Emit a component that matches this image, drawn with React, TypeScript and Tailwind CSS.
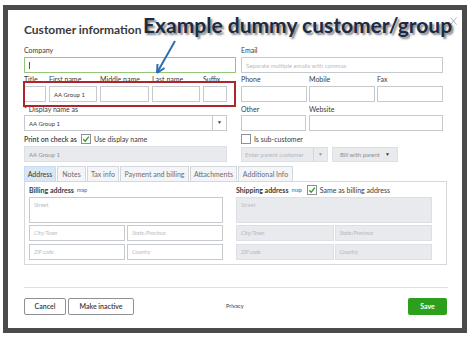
import React from 'react';

const Label = ({ children, className = '' }: { children?: React.ReactNode; className?: string }) => (
  <div className={`h-[9px] text-[7px] leading-[9px] text-[#393a3d] whitespace-nowrap ${className}`}>{children}</div>
);

const Field = ({ text, placeholder, className = '' }: { text?: string; placeholder?: string; className?: string }) => (
  <div className={`h-[16px] border border-[#c6c9ce] bg-white flex items-center px-[4px] text-[6px] whitespace-nowrap overflow-hidden ${className}`}>
    {text && <span className="text-[#393a3d]">{text}</span>}
    {placeholder && <span className="text-[#b8bcc2]">{placeholder}</span>}
  </div>
);

const GrayField = ({ placeholder, className = '' }: { placeholder?: string; className?: string }) => (
  <div className={`h-[16px] border border-[#dcdfe3] bg-[#e8eaed] flex items-center px-[4px] text-[6px] text-[#b3b7bd] whitespace-nowrap overflow-hidden ${className}`}>
    {placeholder}
  </div>
);

const Check = () => (
  <div className="w-[10px] h-[10px] border border-[#8d9096] bg-white flex items-center justify-center">
    <svg width="8" height="8" viewBox="0 0 8 8">
      <path d="M1.2 4.3 L3.2 6.2 L6.8 1.6" fill="none" stroke="#2ca01c" strokeWidth="1.3" />
    </svg>
  </div>
);

export default function App() {
  const tabs = [
    { name: 'Address', w: 'w-[32px]' },
    { name: 'Notes', w: 'w-[29px]' },
    { name: 'Tax info', w: 'w-[32px]' },
    { name: 'Payment and billing', w: 'w-[69px]' },
    { name: 'Attachments', w: 'w-[47px]' },
    { name: 'Additional Info', w: 'w-[55px]' },
  ];

  return (
    <div className="relative w-[474px] h-[340px] bg-white pt-[5px] pl-[3px] font-['Lato',sans-serif] overflow-hidden">
      <div className="w-[464px] h-[328px] border-[5px] border-[#4b4b4b] bg-white pl-[16px] pr-[15px] pt-[12px]">
        <div className="h-[16px] text-[12px] leading-[16px] font-bold text-[#393a3d]">Customer information</div>

        {/* top fields */}
        <div className="flex gap-[5px] mt-[8px]">
          <div className="w-[212px] flex flex-col">
            <Label>Company</Label>
            <div className="mt-[2px] h-[16px] border border-[#94c77a] bg-white flex items-center px-[4px]">
              <div className="w-px h-[7px] bg-[#555]" />
            </div>

            <div className="flex gap-[3px] mt-[2px]">
              {[
                ['Title', 'w-[22px]', ''],
                ['First name', 'w-[48px]', 'AA Group 1'],
                ['Middle name', 'w-[49px]', ''],
                ['Last name', 'w-[48px]', ''],
                ['Suffix', 'w-[24px]', ''],
              ].map(([l, w, t]) => (
                <div key={l} className={`${w} flex flex-col`}>
                  <Label>{l}</Label>
                  <Field text={t || undefined} className="mt-[2px]" />
                </div>
              ))}
            </div>

            <Label className="mt-[3px]">* Display name as</Label>
            <div className="mt-[1px] w-[203px] h-[16px] border border-[#c6c9ce] bg-white flex items-center text-[6px] text-[#393a3d]">
              <span className="flex-1 px-[4px]">AA Group 1</span>
              <div className="w-[14px] h-full border-l border-[#c6c9ce] flex items-center justify-center text-[5px] text-[#393a3d]">▼</div>
            </div>

            <div className="mt-[2px] h-[12px] flex items-center gap-[2px] text-[7px] text-[#393a3d]">
              <span className="font-semibold w-[55px]">Print on check as</span>
              <Check />
              <span className="ml-[1px]">Use display name</span>
            </div>
            <GrayField className="mt-[1px] w-[203px] !text-[#8d9096]" placeholder="AA Group 1" />
          </div>

          <div className="w-[202px] flex flex-col">
            <Label>Email</Label>
            <Field className="mt-[2px]" placeholder="Separate multiple emails with commas" />

            <div className="grid grid-cols-3 gap-[2px] mt-[2px]">
              {['Phone', 'Mobile', 'Fax'].map((l) => (
                <div key={l} className="flex flex-col">
                  <Label>{l}</Label>
                  <Field className="mt-[2px]" />
                </div>
              ))}
            </div>

            <div className="flex gap-[3px] mt-[3px]">
              <div className="w-[65px] flex flex-col">
                <Label>Other</Label>
                <Field className="mt-[1px]" />
              </div>
              <div className="flex-1 flex flex-col">
                <Label>Website</Label>
                <Field className="mt-[1px]" />
              </div>
            </div>

            <div className="mt-[2px] h-[12px] flex items-center gap-[3px] text-[7px] text-[#393a3d]">
              <div className="w-[10px] h-[10px] border border-[#8d9096] bg-white" />
              <span>Is sub-customer</span>
            </div>

            <div className="mt-[2px] flex gap-[4px]">
              <div className="w-[87px] h-[15px] bg-[#e8eaed] border border-[#dcdfe3] flex items-center text-[6px] text-[#b3b7bd]">
                <span className="flex-1 px-[3px] whitespace-nowrap overflow-hidden">Enter parent customer</span>
                <div className="w-[14px] h-full border-l border-[#d4d7dc] flex items-center justify-center text-[5px] text-[#9a9ea5]">▼</div>
              </div>
              <div className="w-[66px] h-[15px] bg-[#e8eaed] border border-[#dcdfe3] flex items-center justify-between px-[7px] text-[6px] text-[#8d9096]">
                <span>Bill with parent</span>
                <span className="text-[5px] text-[#393a3d]">▼</span>
              </div>
            </div>
          </div>
        </div>

        {/* tabs */}
        <div className="flex gap-px mt-[4px] h-[15px]">
          {tabs.map((t, i) => (
            <div
              key={t.name}
              className={`${t.w} h-[15px] flex items-center justify-center text-[7px] whitespace-nowrap border border-b-0 ${
                i === 0 ? 'bg-[#d9e7f4] border-[#c9dbee] text-[#393a3d]' : 'bg-[#f4f5f8] border-[#d4d7dc] text-[#6b6c72]'
              }`}
            >
              {t.name}
            </div>
          ))}
        </div>
        <div className="w-[423px] h-[84px] border border-[#d4d7dc] flex pl-[4px] pt-[3px] gap-[13px]">
          <div className="w-[194px] flex flex-col">
            <div className="h-[10px] flex items-center gap-[3px] text-[7px]">
              <span className="font-bold text-[#393a3d]">Billing address</span>
              <span className="text-[5.5px] text-[#0077c5]">map</span>
            </div>
            <div className="mt-[2px] h-[26px] border border-[#c6c9ce] px-[4px] pt-[3px] text-[5.5px] text-[#b8bcc2]">Street</div>
            <div className="grid grid-cols-2 gap-[2px] mt-[2px]">
              <Field placeholder="City/Town" className="!text-[5.5px] italic" />
              <Field placeholder="State/Province" className="!text-[5.5px] italic" />
            </div>
            <div className="grid grid-cols-2 gap-[2px] mt-[3px]">
              <Field placeholder="ZIP code" className="!text-[5.5px] italic" />
              <Field placeholder="Country" className="!text-[5.5px] italic" />
            </div>
          </div>
          <div className="w-[196px] flex flex-col">
            <div className="h-[10px] flex items-center gap-[3px] text-[7px]">
              <span className="font-bold text-[#393a3d]">Shipping address</span>
              <span className="text-[5.5px] text-[#0077c5]">map</span>
              <div className="ml-[2px]"><Check /></div>
              <span className="text-[#393a3d]">Same as billing address</span>
            </div>
            <div className="mt-[2px] h-[26px] bg-[#e8eaed] border border-[#dcdfe3] px-[4px] pt-[3px] text-[5.5px] text-[#bfc3c8]">Street</div>
            <div className="grid grid-cols-2 gap-[1px] mt-[2px]">
              <GrayField placeholder="City/Town" className="!text-[5.5px] italic" />
              <GrayField placeholder="State/Province" className="!text-[5.5px] italic" />
            </div>
            <div className="grid grid-cols-2 gap-[1px] mt-[3px]">
              <GrayField placeholder="ZIP code" className="!text-[5.5px] italic" />
              <GrayField placeholder="Country" className="!text-[5.5px] italic" />
            </div>
          </div>
        </div>

        <div className="mt-[22px] w-[424px] h-px bg-[#dcdfe3]" />

        <div className="mt-[10px] flex items-center w-[423px]">
          <div className="w-[42px] h-[17px] border border-[#8d9096] rounded-[2px] flex items-center justify-center text-[7px] font-semibold text-[#393a3d]">Cancel</div>
          <div className="ml-[2px] w-[66px] h-[17px] border border-[#8d9096] rounded-[2px] flex items-center justify-center text-[7px] font-semibold text-[#393a3d]">Make inactive</div>
          <div className="ml-[92px] text-[5.5px] text-[#393a3d]">Privacy</div>
          <div className="ml-auto w-[39px] h-[17px] bg-[#2ca01c] rounded-[2px] flex items-center justify-center text-[7px] font-bold text-white">Save</div>
        </div>
      </div>

      {/* close */}
      <svg className="absolute left-[450px] top-[17px]" width="7" height="8" viewBox="0 0 7 8">
        <path d="M0.5 0.5 L6.5 7.5 M6.5 0.5 L0.5 7.5" stroke="#9a9ea5" strokeWidth="0.8" />
      </svg>

      {/* annotation overlays */}
      <div className="absolute left-[143px] top-[11px] text-[21px] leading-[28px] font-bold text-[#1c2a44] whitespace-nowrap [text-shadow:2px_2px_2px_rgba(80,80,80,0.7)]">
        Example dummy customer/group
      </div>
      <svg className="absolute left-[150px] top-[38px]" width="32" height="38" viewBox="0 0 32 38">
        <path d="M25 3 L8 33" stroke="#2f6cb5" strokeWidth="2" fill="none" />
        <path d="M7 35 L7.5 26 M7 35 L14.5 30" stroke="#2f6cb5" strokeWidth="2" fill="none" />
      </svg>
      <div className="absolute left-[23px] top-[81px] w-[213px] h-[26px] border-2 border-[#b0252b]" />
    </div>
  );
}
